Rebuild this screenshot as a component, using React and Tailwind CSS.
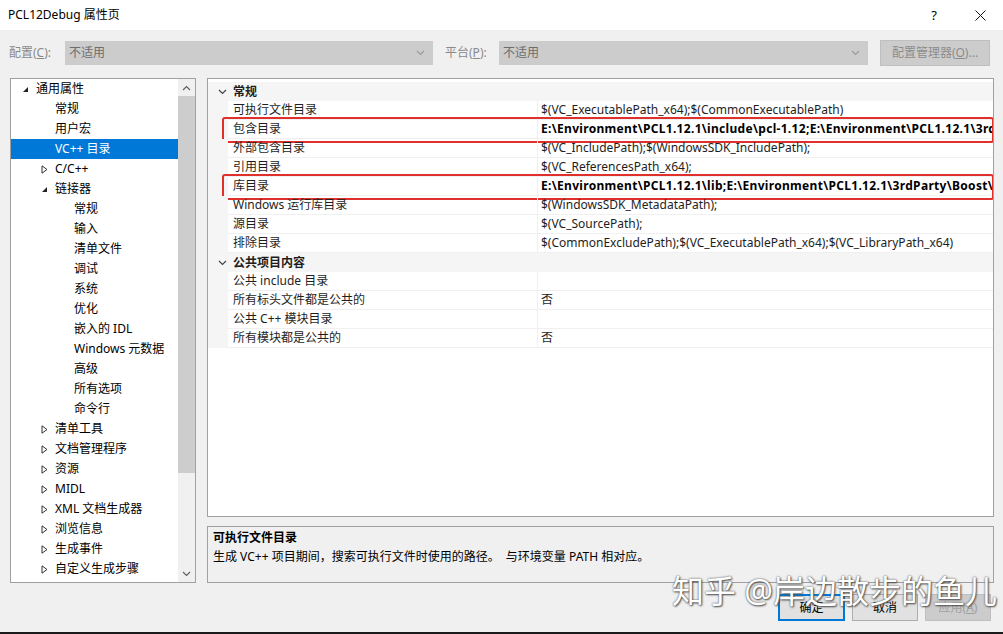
import React from 'react';

const tree = [
  { text: '通用属性', level: 0, arrow: 'open' },
  { text: '常规', level: 1 },
  { text: '用户宏', level: 1 },
  { text: 'VC++ 目录', level: 1, selected: true },
  { text: 'C/C++', level: 1, arrow: 'closed' },
  { text: '链接器', level: 1, arrow: 'open' },
  { text: '常规', level: 2 },
  { text: '输入', level: 2 },
  { text: '清单文件', level: 2 },
  { text: '调试', level: 2 },
  { text: '系统', level: 2 },
  { text: '优化', level: 2 },
  { text: '嵌入的 IDL', level: 2 },
  { text: 'Windows 元数据', level: 2 },
  { text: '高级', level: 2 },
  { text: '所有选项', level: 2 },
  { text: '命令行', level: 2 },
  { text: '清单工具', level: 1, arrow: 'closed' },
  { text: '文档管理程序', level: 1, arrow: 'closed' },
  { text: '资源', level: 1, arrow: 'closed' },
  { text: 'MIDL', level: 1, arrow: 'closed' },
  { text: 'XML 文档生成器', level: 1, arrow: 'closed' },
  { text: '浏览信息', level: 1, arrow: 'closed' },
  { text: '生成事件', level: 1, arrow: 'closed' },
  { text: '自定义生成步骤', level: 1, arrow: 'closed' },
];

const groups = [
  {
    title: '常规',
    rows: [
      { name: '可执行文件目录', value: '$(VC_ExecutablePath_x64);$(CommonExecutablePath)' },
      { name: '包含目录', value: 'E:\\Environment\\PCL1.12.1\\include\\pcl-1.12;E:\\Environment\\PCL1.12.1\\3rdParty\\Boost\\include\\boost-1_78;', bold: true, mark: true },
      { name: '外部包含目录', value: '$(VC_IncludePath);$(WindowsSDK_IncludePath);' },
      { name: '引用目录', value: '$(VC_ReferencesPath_x64);' },
      { name: '库目录', value: 'E:\\Environment\\PCL1.12.1\\lib;E:\\Environment\\PCL1.12.1\\3rdParty\\Boost\\lib;E:\\Environment\\PCL1.12.1\\3rdParty\\FLANN\\lib;', bold: true, mark: true },
      { name: 'Windows 运行库目录', value: '$(WindowsSDK_MetadataPath);' },
      { name: '源目录', value: '$(VC_SourcePath);' },
      { name: '排除目录', value: '$(CommonExcludePath);$(VC_ExecutablePath_x64);$(VC_LibraryPath_x64)' },
    ],
  },
  {
    title: '公共项目内容',
    rows: [
      { name: '公共 include 目录', value: '' },
      { name: '所有标头文件都是公共的', value: '否' },
      { name: '公共 C++ 模块目录', value: '' },
      { name: '所有模块都是公共的', value: '否' },
    ],
  },
];

function Chevron({ up, className }) {
  return (
    <svg width="9" height="6" viewBox="0 0 9 6" className={className}>
      <path d={up ? 'M1 5 L4.5 1.5 L8 5' : 'M1 1 L4.5 4.5 L8 1'} fill="none" stroke="currentColor" strokeWidth="1.2" />
    </svg>
  );
}

function TreeArrow({ kind }) {
  if (kind === 'open') {
    return (
      <svg width="7" height="7" viewBox="0 0 7 7">
        <path d="M6 1 L6 6 L1 6 Z" fill="#222" />
      </svg>
    );
  }
  if (kind === 'closed') {
    return (
      <svg width="7" height="9" viewBox="0 0 7 9">
        <path d="M1 0.8 L6 4.5 L1 8.2 Z" fill="none" stroke="#333" strokeWidth="1" />
      </svg>
    );
  }
  return null;
}

function Combo({ width, text }) {
  return (
    <div className={`flex h-[24px] ${width} items-center justify-between bg-[#cccccc] pl-[4px] pr-[8px] text-[#6d6d6d]`}>
      <span>{text}</span>
      <Chevron className="text-[#9a9a9a]" />
    </div>
  );
}

export default function App() {
  return (
    <div className="relative flex h-[634px] w-[1003px] flex-col overflow-hidden bg-[#f0f0f0] font-['Noto_Sans','Noto_Sans_CJK_SC',sans-serif] text-[12px] leading-none text-black">
      {/* title bar */}
      <div className="flex h-[30px] shrink-0 items-center bg-white pl-[8px]">
        <span className="flex-1 text-[12px]">PCL12Debug 属性页</span>
        <span className="w-[46px] text-center text-[13px]">?</span>
        <span className="flex w-[46px] items-center justify-center">
          <svg width="11" height="11" viewBox="0 0 11 11">
            <path d="M0.5 0.5 L10.5 10.5 M10.5 0.5 L0.5 10.5" stroke="#111" strokeWidth="1" />
          </svg>
        </span>
      </div>

      {/* config row */}
      <div className="flex h-[48px] shrink-0 items-center pb-[6px] pl-[9px] pr-[13px] pt-[4px]">
        <span className="w-[56px] text-[#8a8a8a]">配置(<u>C</u>):</span>
        <Combo width="w-[368px]" text="不适用" />
        <span className="ml-[12px] w-[54px] text-[#8a8a8a]">平台(<u>P</u>):</span>
        <Combo width="w-[369px]" text="不适用" />
        <div className="ml-auto flex h-[26px] w-[110px] items-center justify-center border border-[#bfbfbf] bg-[#cccccc] text-[#8d8d8d]">
          配置管理器(<u>O</u>)...
        </div>
      </div>

      {/* main */}
      <div className="flex h-[505px] shrink-0 pl-[10px]">
        {/* tree */}
        <div className="flex w-[186px] border border-[#a0a0a0] bg-white">
          <div className="flex-1 overflow-hidden">
            {tree.map((item, i) => (
              <div
                key={i}
                className={`flex h-[20px] items-center ${item.selected ? 'bg-[#0078d7] text-white' : ''}`}
                style={{ paddingLeft: 11 + item.level * 19 }}
              >
                <span className="flex w-[14px] items-center">
                  <TreeArrow kind={item.arrow} />
                </span>
                <span className="whitespace-nowrap">{item.text}</span>
              </div>
            ))}
          </div>
          <div className="flex w-[17px] flex-col items-center bg-[#f0f0f0]">
            <div className="flex h-[17px] items-center justify-center text-[#606060]">
              <Chevron up />
            </div>
            <div className="h-[377px] w-[17px] bg-[#cdcdcd]" />
            <div className="flex-1" />
            <div className="flex h-[17px] items-center justify-center text-[#606060]">
              <Chevron />
            </div>
          </div>
        </div>

        {/* right column */}
        <div className="ml-[11px] flex w-[787px] flex-col">
          <div className="h-[441px] overflow-hidden border border-[#a0a0a0] bg-white pt-[3px] text-[#1e1e1e]">
            {groups.map((g) => (
              <div key={g.title}>
                <div className="flex h-[19px] items-center bg-[#f5f5f5]">
                  <span className="flex w-[25px] justify-center pl-[3px] text-[#444]">
                    <Chevron />
                  </span>
                  <span className="font-bold">{g.title}</span>
                </div>
                {g.rows.map((r) => (
                  <div key={r.name} className="relative flex h-[19px] items-center">
                    <div className="h-full w-[20px] bg-[#f5f5f5]" />
                    <div className="flex h-full w-[309px] items-center border-b border-[#f0f0f0] pl-[5px] whitespace-nowrap">
                      {r.name}
                    </div>
                    <div className={`flex h-full flex-1 items-center overflow-hidden border-b border-l border-[#f0f0f0] pl-[3px] whitespace-nowrap ${r.bold ? 'font-bold tracking-[0.31px] text-black' : ''}`}>
                      {r.value}
                    </div>
                    {r.mark && (
                      <div className="absolute bottom-[-4px] left-[14px] right-[-1px] top-[-3px] rounded-[3px] border-[2.5px] border-[#e0302c]" />
                    )}
                  </div>
                ))}
              </div>
            ))}
          </div>
          <div className="mt-[9px] flex h-[57px] flex-col border border-[#a0a0a0] px-[5px] pt-[5px]">
            <div className="font-bold">可执行文件目录</div>
            <div className="mt-[7px] whitespace-pre">生成 VC++ 项目期间，搜索可执行文件时使用的路径。  与环境变量 PATH 相对应。</div>
          </div>
        </div>
      </div>

      {/* buttons */}
      <div className="flex flex-1 items-start justify-end gap-[7px] pr-[12px] pt-[11px]">
        <div className="flex h-[27px] w-[67px] items-center justify-center border-2 border-[#0078d7] bg-[#e1e1e1]">确定</div>
        <div className="flex h-[27px] w-[66px] items-center justify-center border border-[#adadad] bg-[#e1e1e1]">取消</div>
        <div className="flex h-[27px] w-[66px] items-center justify-center border border-[#bfbfbf] bg-[#cccccc] text-[#a0a0a0]">
          应用(<u>A</u>)
        </div>
      </div>
      <div className="h-[2px] shrink-0 bg-[#1a1a1a]" />

      {/* watermark */}
      <div className="pointer-events-none absolute left-[672px] top-[575px] whitespace-nowrap text-[32px] text-white [text-shadow:0_0_2px_#444,1px_1px_2px_#555]">
        知乎 @岸边散步的鱼儿
      </div>
    </div>
  );
}
